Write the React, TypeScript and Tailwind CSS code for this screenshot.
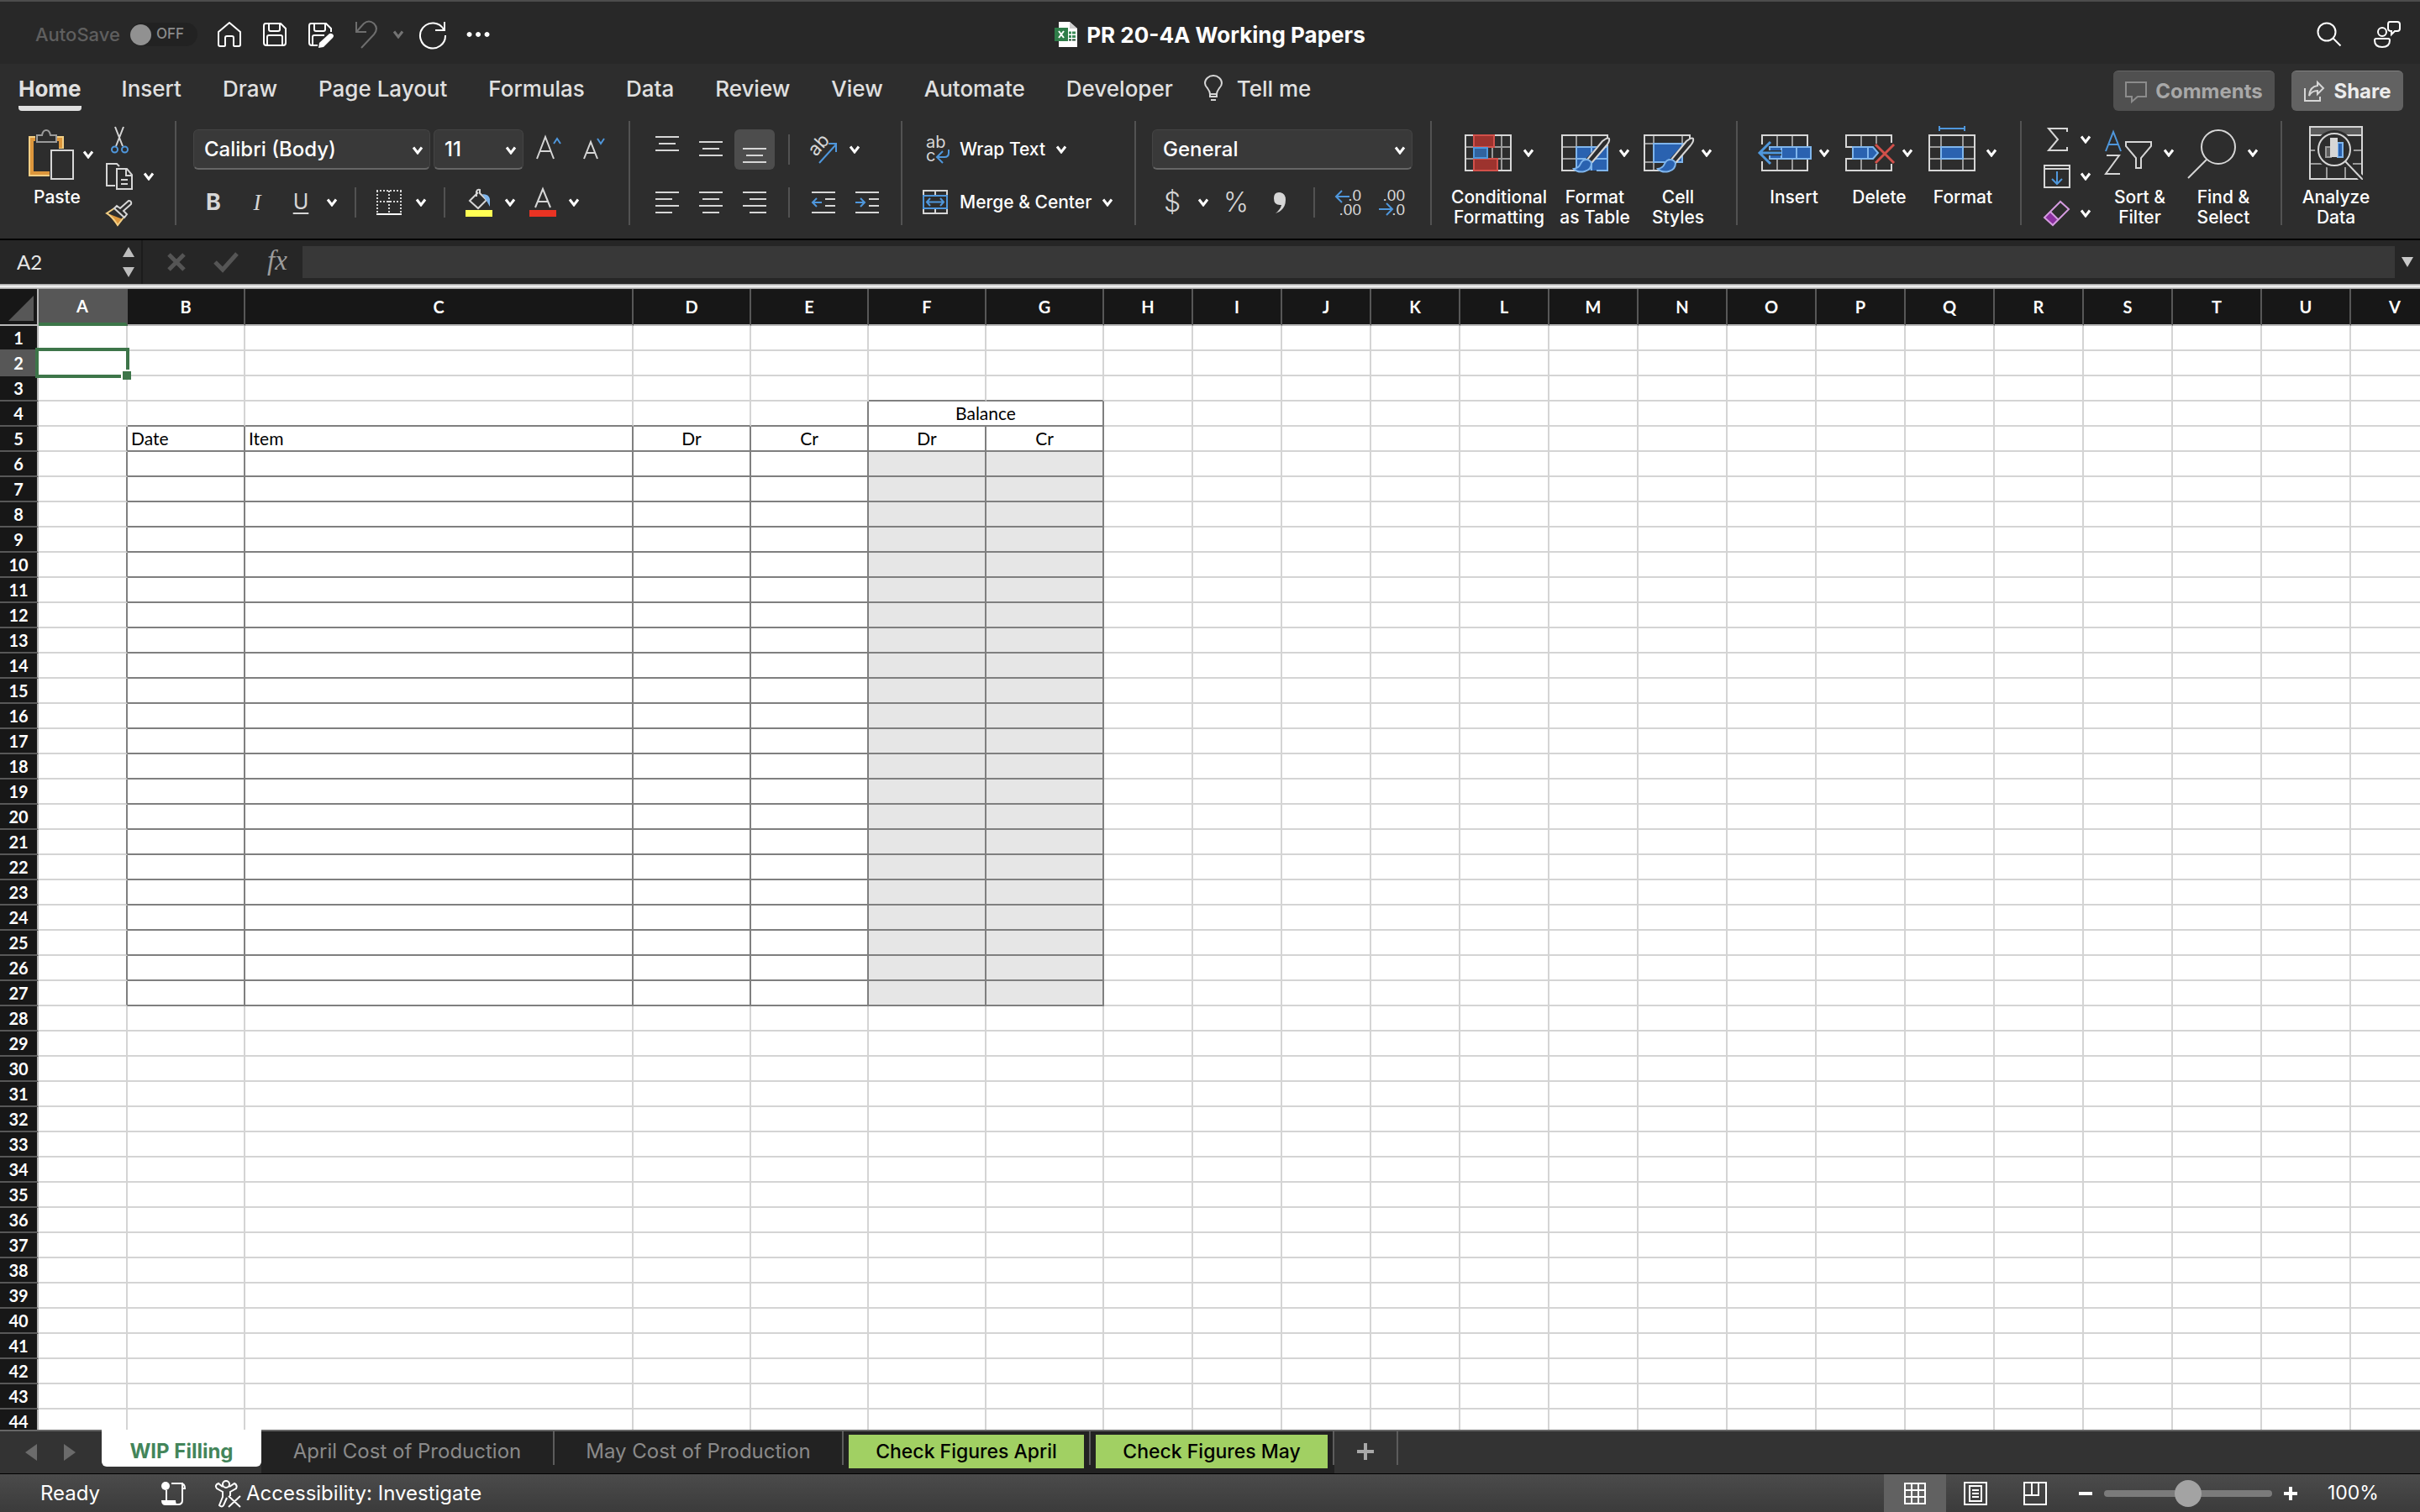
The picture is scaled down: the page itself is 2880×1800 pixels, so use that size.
import React from 'react';

const columns = [
  { name: 'A', col: 'w-[106px]' },
  { name: 'B', col: 'w-[140px]' },
  { name: 'C', col: 'w-[462px]' },
  { name: 'D', col: 'w-[140px]' },
  { name: 'E', col: 'w-[140px]' },
  { name: 'F', col: 'w-[140px]' },
  { name: 'G', col: 'w-[140px]' },
  ...'HIJKLMNOPQRSTUV'.split('').map((name) => ({ name, col: 'w-[106px]' })),
];

const rows = Array.from({ length: 44 }, (_, i) => i + 1);

const cellText: Record<string, string> = {
  F4: 'Balance',
  B5: 'Date',
  C5: 'Item',
  D5: 'Dr',
  E5: 'Cr',
  F5: 'Dr',
  G5: 'Cr',
};

const menuTabs = ['Insert', 'Draw', 'Page Layout', 'Formulas', 'Data', 'Review', 'View', 'Automate', 'Developer'];

const Chevron = ({ className = '' }) => (
  <svg className={`h-[10px] w-[14px] shrink-0 ${className}`} viewBox="0 0 14 10" fill="none" stroke="#fff" strokeWidth="3">
    <path d="M2 1.5 7 8l5-6.5" />
  </svg>
);

// Svg canvas whose units are page pixels
const Icon = ({ w, h, className, children }: { w: number; h: number; className: string; children: React.ReactNode }) => (
  <svg className={`shrink-0 overflow-visible ${className}`} viewBox={`0 0 ${w} ${h}`} fill="none" stroke="#d6d6d6" strokeWidth="2">
    {children}
  </svg>
);

const Lines = ({ d, className = 'h-12 w-7', h = 48 }: { d: string; className?: string; h?: number }) => (
  <Icon w={28} h={h} className={className}>
    <path d={d} />
  </Icon>
);

const Divider = ({ className = '' }) => <div className={`h-9 w-0.5 shrink-0 bg-[#525252] ${className}`} />;

const Group = ({ className = '', children }: { className?: string; children: React.ReactNode }) => (
  <div className={`flex h-[124px] shrink-0 border-r-2 border-[#525252] ${className}`}>{children}</div>
);

// Large ribbon button: icon with a chevron, label below
const BigButton = ({ label, className, chevron = true, children }: { label: string[]; className: string; chevron?: boolean; children: React.ReactNode }) => (
  <button className={`flex shrink-0 flex-col items-center pt-1.5 text-[21px] leading-6 font-medium text-white ${className}`}>
    <span className="flex h-16 w-full items-center justify-between">
      {children}
      {chevron && <Chevron />}
    </span>
    <span className="mt-[9px] flex flex-col items-center whitespace-nowrap">
      {label.map((line) => (
        <span key={line}>{line}</span>
      ))}
    </span>
  </button>
);

const Dropdown = ({ label, value, className }: { label: string; value: string; className: string }) => (
  <div className={`relative h-12 shrink-0 ${className}`}>
    <select
      aria-label={label}
      defaultValue={value}
      className="h-full w-full appearance-none rounded-md border border-b-2 border-[#444] border-b-[#666] bg-[#393939] pl-3 text-[24px] font-medium text-white"
    >
      <option>{value}</option>
    </select>
    <Chevron className="pointer-events-none absolute top-5 right-2" />
  </div>
);

const TitleBar = () => (
  <header className="grid h-[76px] shrink-0 grid-cols-[1fr_auto_1fr] items-center border-t-2 border-[#4c4c4c] bg-[#282828] pt-1">
    <div className="flex items-center pl-[42px]">
      <label className="flex items-center gap-3 text-[22px] font-medium text-[#5f5f5f]">
        AutoSave
        <input type="checkbox" className="peer sr-only" />
        <span className="flex h-7 w-20 items-center gap-1.5 rounded-full bg-[#222] text-[17px] text-[#8c8c8c]">
          <span className="h-[25px] w-[25px] rounded-full bg-[#919191]" />
          OFF
        </span>
      </label>
      <button aria-label="Home" className="ml-[22px]">
        <Icon w={32} h={32} className="h-8 w-8">
          <path stroke="#fff" strokeLinejoin="round" d="M3 13 16 2l13 11v15q0 2-2 2h-5q-1 0-1-1v-9q0-2-2-2h-6q-2 0-2 2v9q0 1-1 1H5q-2 0-2-2Z" />
        </Icon>
      </button>
      <button aria-label="Save" className="ml-[22px]">
        <Icon w={32} h={32} className="h-8 w-8">
          <path stroke="#fff" d="M5 3h18l6 6v17q0 3-3 3H6q-3 0-3-3V6q0-3 2-3ZM9 3v7q0 2 2 2h9q2 0 2-2V3M7 29V19q0-2 2-2h14q2 0 2 2v10" />
        </Icon>
      </button>
      <button aria-label="Save as" className="ml-[22px]">
        <Icon w={32} h={32} className="h-8 w-8">
          <path stroke="#fff" d="M29 13V9l-6-6H5Q3 3 3 6v20q0 3 3 3h7M9 3v7q0 2 2 2h9q2 0 2-2V3M7 29V19q0-2 2-2h12" />
          <path fill="#fff" stroke="none" d="M27 15q3-1 5 2 0 2-1 3L20 31l-6 1 1-6Z" />
        </Icon>
      </button>
      <button aria-label="Undo" className="ml-6">
        <Icon w={32} h={34} className="h-[34px] w-8">
          <path stroke="#6e6e6e" d="M3 2v12h12M3 14 12 4q6-5 12 0 6 6 0 13L9 33" />
        </Icon>
      </button>
      <Chevron className="ml-3.5 opacity-35" />
      <button aria-label="Redo" className="ml-4">
        <Icon w={36} h={34} className="h-[34px] w-9">
          <path stroke="#fff" d="M32 2v10H21M31 11A15 15 0 1 0 33 18" />
        </Icon>
      </button>
      <button aria-label="More" className="ml-[22px]">
        <Icon w={28} h={8} className="h-2 w-7">
          <path fill="#fff" stroke="none" d="M3.5 1a3 3 0 1 0 .1 0ZM14 1a3 3 0 1 0 .1 0ZM24.5 1a3 3 0 1 0 .1 0Z" />
        </Icon>
      </button>
    </div>
    <h1 className="flex items-center gap-2.5 text-[26px] font-bold whitespace-nowrap text-white">
      <Icon w={28} h={30} className="h-[30px] w-7">
        <path fill="#fff" stroke="none" d="M5 0h13l9 8v22H5Z" />
        <path fill="#cfcfcf" stroke="none" d="M18 0v8h9Z" />
        <path stroke="#3a8a57" strokeWidth="3" d="M17 13h8M17 17.5h8" />
        <path stroke="#1d4a2e" d="M17 21.5h8" />
        <path stroke="#fff" strokeWidth="1" d="M20.5 10v14" />
        <path fill="#2f7d49" stroke="none" d="M0 7h16v16H0Z" />
        <path stroke="#fff" d="m5 11 6 8M11 11l-6 8" />
      </Icon>
      PR 20-4A Working Papers
    </h1>
    <div className="flex items-center justify-end gap-9 pr-[22px]">
      <button aria-label="Search">
        <Icon w={32} h={32} className="h-8 w-8">
          <g stroke="#fff">
            <circle cx="13" cy="13" r="10.5" />
            <path d="m20.5 20.5 9 9" />
          </g>
        </Icon>
      </button>
      <button aria-label="Presence">
        <Icon w={34} h={34} className="h-[34px] w-[34px]">
          <g stroke="#fff">
            <circle cx="11" cy="14" r="5" />
            <path d="M4 22h14q2 0 2 2 0 8-9 8t-9-8q0-2 2-2ZM20 2h9q3 0 3 3v5q0 3-3 3h-3l-4 4v-4q-4 0-4-3V5q0-3 2-3Z" />
          </g>
        </Icon>
      </button>
    </div>
  </header>
);

const MenuBar = () => (
  <nav className="flex h-[68px] shrink-0 items-start bg-[#2d2d2d] pr-5 pl-[22px] text-[26px] font-medium text-[#e0e0e0]">
    <button className="h-14 rounded-b-sm border-b-[6px] border-[#e0e0e0] pt-2 font-bold">Home</button>
    <div className="ml-12 flex h-[58px] items-center gap-[49px] whitespace-nowrap">
      {menuTabs.map((tab) => (
        <button key={tab}>{tab}</button>
      ))}
    </div>
    <button className="ml-9 flex h-[58px] items-center gap-4">
      <Icon w={24} h={32} className="h-8 w-6">
        <path d="M8 23q0-3-3-7-3-3-3-6a10 9 0 0 1 20 0q0 3-3 6-3 4-3 7v3H8Zm0 0h8" />
        <path strokeWidth="2" d="M9 30h6" />
      </Icon>
      Tell me
    </button>
    <div className="mt-2 ml-auto flex gap-5 font-bold">
      <button className="flex h-12 w-48 items-center justify-center gap-2.5 rounded-md border-t border-[#666] bg-[#505050] text-[24px] text-[#a8a8a8]">
        <Icon w={26} h={26} className="h-[26px] w-[26px]">
          <path stroke="#8c8c8c" d="M1 2h24v17H15l-7 6v-6H1Z" />
        </Icon>
        Comments
      </button>
      <button className="flex h-12 w-[133px] items-center justify-center gap-2.5 rounded-md border-t border-[#808080] bg-[#626262] text-[24px] text-[#ececec]">
        <Icon w={26} h={26} className="h-[26px] w-[26px]">
          <path d="M2 9v15h18v-5M17 2l7 7-7 7v-4q-7 0-10 6 1-11 10-12Z" />
        </Icon>
        Share
      </button>
    </div>
  </nav>
);

// Paint brush shared by the table and cell style buttons
const Brush = () => (
  <>
    <path stroke="#2d2d2d" strokeWidth="8" d="M56 18 34 42" />
    <path fill="#2d2d2d" d="M33 40 51 18q6-5 8-3 1 3-3 8L38 44Z" />
    <path fill="#2a62b0" stroke="#7fb5ec" d="M32 40q-5 0-7 5-2 5-8 6 5 5 13 3 8-2 8-10-2-4-6-4Z" />
  </>
);

const Ribbon = () => (
  <section className="flex h-[140px] shrink-0 bg-[#2d2d2d]">
    <Group className="w-[210px] items-start pl-[34px]">
      <button className="w-[78px] pt-2.5 text-left text-[21px] leading-6 font-medium text-white">
        <span className="flex items-center gap-2.5">
          <Icon w={54} h={60} className="h-[60px] w-[54px]">
            <path stroke="#f2cf85" strokeWidth="6" d="M8 11H3v42h22M34 11h5v12" />
            <path stroke="#dc963c" strokeWidth="4" d="M8 12H4v40h21M34 12h4v10" />
            <path fill="#2d2d2d" stroke="#9a9a9a" d="M10 15V7h6q1-6 5-6t5 6h7v8Z" />
            <path fill="#2d2d2d" d="M27 25h26v34H27Z" />
          </Icon>
          <Chevron />
        </span>
        <span className="mt-[9px] block pl-1.5">Paste</span>
      </button>
      <div className="ml-3.5 flex flex-col gap-3 pt-1.5">
        <button aria-label="Cut" className="h-8">
          <Icon w={32} h={32} className="h-8 w-8">
            <path d="m11 1 9 23M21 1l-9 23" />
            <circle cx="10.5" cy="28" r="3.5" stroke="#4f97dc" />
            <circle cx="22.5" cy="28" r="3.5" stroke="#4f97dc" />
          </Icon>
        </button>
        <button aria-label="Copy" className="flex h-8 items-center gap-3">
          <Icon w={32} h={32} className="h-8 w-8">
            <path d="M11 27H1V1h12l3 3M13 7h12l6 7v17H13ZM24 7v8h7M18 20h8M18 25h8" />
          </Icon>
          <Chevron />
        </button>
        <button aria-label="Format painter" className="h-8">
          <Icon w={32} h={32} className="h-8 w-8">
            <path fill="#dc963c" stroke="none" d="m2 16 18 7-6 8Z" />
            <path stroke="#f2cf85" d="m10 10-9 6q7 4 13 14l7-9" />
            <path d="m10 10 12 11 3-4-4-4 9-8q1-4-3-4l-10 9-4-3Z" />
          </Icon>
        </button>
      </div>
    </Group>

    <Group className="w-[540px] flex-col gap-5 pt-2.5 pl-5">
      <div className="flex h-12 items-center">
        <Dropdown label="Font" value="Calibri (Body)" className="w-[282px]" />
        <Dropdown label="Font size" value="11" className="ml-1 w-[107px]" />
        <button aria-label="Increase font size" className="ml-3.5">
          <Icon w={32} h={32} className="h-8 w-8">
            <path d="M2 27 12 1l10 26M5 18h14" />
            <path stroke="#4f97dc" d="m22 9 4-6 4 6" />
          </Icon>
        </button>
        <button aria-label="Decrease font size" className="ml-6">
          <Icon w={28} h={32} className="h-8 w-7">
            <path d="m2 27 8-20 8 20M5 20h10" />
            <path stroke="#4f97dc" d="m18 3 4 6 4-6" />
          </Icon>
        </button>
      </div>
      <div className="flex h-[38px] items-center pl-2 text-[27px] text-[#d6d6d6]">
        <button className="w-8 font-bold">B</button>
        <button className="ml-5 w-8 font-['Liberation_Serif'] italic">I</button>
        <button className="ml-5 w-8 text-[25px] underline decoration-2 underline-offset-4">U</button>
        <Chevron className="ml-3.5" />
        <Divider className="ml-5" />
        <button aria-label="Borders" className="ml-6">
          <Icon w={30} h={32} className="h-8 w-[30px]">
            <path strokeDasharray="2 2" d="M0 2h30M0 15h30M1 2v26M15 2v26M29 2v26" />
            <path stroke="#fff" d="M0 30h30" />
          </Icon>
        </button>
        <Chevron className="ml-4" />
        <Divider className="ml-5" />
        <button aria-label="Fill color" className="ml-6">
          <Icon w={32} h={34} className="h-[34px] w-8">
            <path d="M15 5 5 15l10 9 10-10-8-8V2q-3-1-4 2v6" />
            <path fill="#7fb5ec" stroke="none" d="M20 7q8 0 9 6v9l-4-7Z" />
            <path fill="#fffe54" stroke="none" d="M0 26h32v8H0Z" />
          </Icon>
        </button>
        <Chevron className="ml-3.5" />
        <button aria-label="Font color" className="ml-4">
          <Icon w={32} h={34} className="h-[34px] w-8">
            <path d="m7 23 9-22 9 22M10 16h12" />
            <path fill="#e93323" stroke="none" d="M0 26h32v8H0Z" />
          </Icon>
        </button>
        <Chevron className="ml-3.5" />
      </div>
    </Group>

    <Group className="w-[324px] flex-col gap-5 pt-2.5 pl-5">
      <div className="flex h-12 items-center">
        <div className="flex gap-1">
          <button aria-label="Align top" className="flex w-12 justify-center"><Lines d="M0 9h28M4 17h20M0 25h28" /></button>
          <button aria-label="Align middle" className="flex w-12 justify-center"><Lines d="M0 15h28M4 23h20M0 31h28" /></button>
          <button aria-label="Align bottom" className="flex w-12 justify-center rounded-md bg-[#4d4d4d]"><Lines d="M0 23h28M4 31h20M0 39h28" /></button>
        </div>
        <Divider className="ml-4" />
        <button aria-label="Orientation" className="ml-[22px]">
          <Icon w={36} h={36} className="h-9 w-9">
            <text transform="translate(9 27) rotate(-48)" fill="#d6d6d6" stroke="none" fontSize="22" fontFamily="Inter">ab</text>
            <path stroke="#4f97dc" d="m13 34 20-22M24 11h9v10" />
          </Icon>
        </button>
        <Chevron className="ml-3" />
      </div>
      <div className="flex h-[38px] items-center">
        <div className="flex gap-1">
          <button aria-label="Align left" className="flex w-12 justify-center"><Lines className="h-[26px] w-7" h={26} d="M0 1h28M0 9h20M0 17h28M0 25h20" /></button>
          <button aria-label="Center" className="flex w-12 justify-center"><Lines className="h-[26px] w-7" h={26} d="M0 1h28M4 9h20M0 17h28M4 25h20" /></button>
          <button aria-label="Align right" className="flex w-12 justify-center"><Lines className="h-[26px] w-7" h={26} d="M0 1h28M8 9h20M0 17h28M8 25h20" /></button>
        </div>
        <Divider className="ml-4" />
        <div className="ml-4 flex gap-1">
          <button aria-label="Decrease indent" className="flex w-12 justify-center">
            <Icon w={28} h={26} className="h-[26px] w-7">
              <path d="M0 1h28M16 9h12M16 17h12M0 25h28" />
              <path stroke="#4f97dc" d="M12 13H1M6 8l-5 5 5 5" />
            </Icon>
          </button>
          <button aria-label="Increase indent" className="flex w-12 justify-center">
            <Icon w={28} h={26} className="h-[26px] w-7">
              <path d="M0 1h28M16 9h12M16 17h12M0 25h28" />
              <path stroke="#4f97dc" d="M0 13h11M6 8l5 5-5 5" />
            </Icon>
          </button>
        </div>
      </div>
    </Group>

    <Group className="w-[278px] flex-col gap-5 pt-2.5 pl-6 text-[21px] font-medium text-white">
      <button className="flex h-12 items-center gap-3 whitespace-nowrap">
        <Icon w={32} h={34} className="h-[34px] w-8">
          <text x="4" y="15" fill="#d6d6d6" stroke="none" fontSize="20" fontWeight="400" fontFamily="Inter">ab</text>
          <text x="4" y="31" fill="#d6d6d6" stroke="none" fontSize="20" fontWeight="400" fontFamily="Inter">c</text>
          <path stroke="#4f97dc" d="M31 17v4q0 5-5 5h-9M24 19l-7 7 7 7" />
        </Icon>
        Wrap Text
        <Chevron />
      </button>
      <button className="flex h-[38px] items-center gap-3 whitespace-nowrap">
        <Icon w={32} h={32} className="h-8 w-8">
          <path d="M1 2h28v27H1ZM15 2v6M15 23v6" />
          <path fill="#2d2d2d" stroke="#4f97dc" d="M1 8h28v15H1ZM5 15.5h20M9 11l-4 4.5 4 4.5M21 11l4 4.5-4 4.5" />
        </Icon>
        Merge &amp; Center
        <Chevron />
      </button>
    </Group>

    <Group className="w-[352px] flex-col gap-5 pt-2.5 pl-[19px]">
      <Dropdown label="Number format" value="General" className="w-[310px]" />
      <div className="flex h-[38px] items-center pl-2 text-[32px] font-light text-[#d6d6d6]">
        <button className="w-8">$</button>
        <Chevron className="ml-3.5" />
        <button className="ml-4 w-8">%</button>
        <button aria-label="Comma style" className="ml-5 w-8">
          <Icon w={32} h={32} className="h-8 w-8">
            <path fill="#d6d6d6" stroke="none" d="M15 4q8 0 8 9 0 12-12 16 6-5 7-10-9 1-9-8 0-7 6-7Z" />
          </Icon>
        </button>
        <Divider className="ml-6" />
        <button aria-label="Increase decimal" className="ml-[22px]">
          <Icon w={34} h={34} className="h-[34px] w-[34px]">
            <g fill="#d6d6d6" stroke="none" fontSize="19" fontWeight="400" fontFamily="Liberation Sans" textAnchor="end">
              <text x="33" y="15">.0</text>
              <text x="33" y="32">.00</text>
            </g>
            <path stroke="#4f97dc" d="M19 10H3M10 3l-7 7 7 7" />
          </Icon>
        </button>
        <button aria-label="Decrease decimal" className="ml-[18px]">
          <Icon w={34} h={34} className="h-[34px] w-[34px]">
            <g fill="#d6d6d6" stroke="none" fontSize="19" fontWeight="400" fontFamily="Liberation Sans" textAnchor="end">
              <text x="33" y="15">.00</text>
              <text x="33" y="32">.0</text>
            </g>
            <path stroke="#4f97dc" d="M2 25h16M11 18l7 7-7 7" />
          </Icon>
        </button>
      </div>
    </Group>

    <Group className="w-[364px] pl-[22px]">
      <BigButton label={['Conditional', 'Formatting']} className="w-[116px] px-4">
        <Icon w={58} h={64} className="h-16 w-[58px]">
          <path stroke="#9a9a9a" d="M2 25h54M2 39h54M45 11v42M12 11v42M34 11v42" />
          <path d="M2 11h54v42H2Z" />
          <path fill="#9d332e" stroke="#d2504a" d="M12 11h24v14H12ZM12 39h28v14H12Z" />
          <path fill="#31639f" stroke="#4f97dc" d="M12 26h16v12H12Z" />
        </Icon>
      </BigButton>
      <BigButton label={['Format', 'as Table']} className="ml-3.5 w-[84px]">
        <Icon w={62} h={64} className="h-16 w-[62px]">
          <path fill="#2a62b0" stroke="none" d="M20 25h37v28H20Z" />
          <path stroke="#9a9a9a" d="M3 25h54M3 39h17M20 11v42M38 11v14" />
          <path d="M57 25V11H3v42h20" />
          <path stroke="#7fb5ec" d="M20 53V25h37v28H44M20 39h37M38 25v28" />
          <Brush />
        </Icon>
      </BigButton>
      <BigButton label={['Cell', 'Styles']} className="ml-4 w-[82px]">
        <Icon w={62} h={64} className="h-16 w-[62px]">
          <path stroke="#9a9a9a" d="M1 21h54M1 43h12M12 11v42M46 11v10" />
          <path d="M55 21V11H1v42h22" />
          <path fill="#2a62b0" stroke="#7fb5ec" d="M12 21h34v22H12Z" />
          <Brush />
        </Icon>
      </BigButton>
    </Group>

    <Group className="w-[338px] gap-[18px] pl-6">
      <BigButton label={['Insert']} className="w-[86px]">
        <Icon w={66} h={64} className="h-16 w-[66px]">
          <path stroke="#9a9a9a" d="M23 11v14M41 11v14M23 39v14M41 39v14" />
          <path d="M5 22V11h54v14M5 42v11h54V39" />
          <path fill="#2a62b0" stroke="#7fb5ec" d="M14 25h49v14H14ZM28 25v14M46 25v14" />
          <path stroke="#2d2d2d" strokeWidth="6" d="M28 32H6" />
          <path stroke="#4f97dc" strokeWidth="3" d="M28 32H2M15 19 2 32l13 13" />
        </Icon>
      </BigButton>
      <BigButton label={['Delete']} className="w-[81px]">
        <Icon w={62} h={64} className="h-16 w-[62px]">
          <path stroke="#9a9a9a" d="M19 11v14M37 11v10M19 39v14M37 45v8" />
          <path d="M9 25H1V11h54v9M9 39H1v14h54v-8" />
          <path fill="#2a62b0" stroke="#7fb5ec" d="M9 25h24l6 7-6 7H9ZM27 25v14" />
          <path stroke="#d2504a" strokeWidth="3" d="m36 22 22 22M58 22 36 44" />
        </Icon>
      </BigButton>
      <BigButton label={['Format']} className="w-[82px]">
        <Icon w={58} h={64} className="h-16 w-[58px]">
          <path stroke="#9a9a9a" d="M1 25h54M1 39h54M15 11v42M41 11v42" />
          <path d="M1 11h54v42H1Z" />
          <path fill="#2a62b0" stroke="#7fb5ec" d="M15 25h26v14H15Z" />
          <path stroke="#4f97dc" d="M13 3h30M13 0v6M43 0v6" />
        </Icon>
      </BigButton>
    </Group>

    <Group className="w-[310px] pl-[26px]">
      <div className="flex flex-col gap-3 pt-1.5">
        <button aria-label="AutoSum" className="flex h-8 items-center gap-[11px]">
          <Icon w={32} h={32} className="h-8 w-8">
            <path d="M28 7V3H6l11 13L6 29h22v-4" />
          </Icon>
          <Chevron />
        </button>
        <button aria-label="Fill" className="flex h-8 items-center gap-[11px]">
          <Icon w={32} h={32} className="h-8 w-8">
            <path d="M1 3h30v26H1ZM1 7h30" />
            <path stroke="#4f97dc" d="M16 10v15M10 19l6 6 6-6" />
          </Icon>
          <Chevron />
        </button>
        <button aria-label="Clear" className="flex h-8 items-center gap-[11px]">
          <Icon w={32} h={32} className="h-8 w-8">
            <path fill="#8b2fa0" stroke="none" d="m8 14 10 10-7 6L1 21Z" />
            <path stroke="#d59be0" d="M20 2 1 21l10 9 19-19ZM8 14l10 10" />
          </Icon>
          <Chevron />
        </button>
      </div>
      <BigButton label={['Sort &', 'Filter']} className="ml-4 w-[83px]">
        <Icon w={60} h={64} className="h-16 w-[60px]">
          <path stroke="#4f97dc" d="m1 30 9-23 9 23M4 22h12" />
          <path d="M2 35h15L1 57h17M25 19h30v5L43 38v12h-6V38L25 24Z" />
        </Icon>
      </BigButton>
      <BigButton label={['Find &', 'Select']} className="ml-4 w-[84px]">
        <Icon w={62} h={64} className="h-16 w-[62px]">
          <circle cx="36" cy="25" r="20" />
          <path d="M22 40 0 62" />
        </Icon>
      </BigButton>
    </Group>

    <BigButton label={['Analyze', 'Data']} chevron={false} className="ml-[22px] w-[84px] px-2.5">
      <Icon w={64} h={64} className="h-16 w-16">
        <path fill="#5c5c5c" stroke="none" d="M1 1h62v10H1Z" />
        <path stroke="#9a9a9a" d="M1 29h10M52 29h11M1 45h40M52 45h11M21 49v14M43 49v14" />
        <path d="M1 1h62v62H1ZM1 11h62" />
        <circle cx="30" cy="28" r="22" fill="#2d2d2d" stroke="#2d2d2d" />
        <path stroke="#2d2d2d" strokeWidth="7" d="m43 43 20 20" />
        <path fill="#5c5c5c" stroke="#9a9a9a" d="M20 25h6v12h-6Z" />
        <path fill="#2a62b0" stroke="#7fb5ec" d="M34 20h6v17h-6Z" />
        <path fill="#d6d6d6" stroke="none" d="M25 14h9v23h-9Z" />
        <circle cx="30" cy="28" r="19" />
        <path d="m43 42 20 21" />
      </Icon>
    </BigButton>
  </section>
);

const FormulaBar = () => (
  <section className="flex h-[54px] shrink-0 items-center border-t-2 border-black bg-[#262626]">
    <div className="flex h-full w-[170px] items-center justify-between border-r-2 border-[#1c1c1c] pr-2">
      <input aria-label="Name box" defaultValue="A2" className="w-28 bg-transparent pl-5 font-['Lato'] text-[24px] text-[#e6e6e6] outline-none" />
      <button aria-label="Cell list">
        <Icon w={14} h={38} className="h-[38px] w-3.5">
          <path fill="#bdbdbd" stroke="none" d="m7 1 7 12H0ZM0 25h14L7 37Z" />
        </Icon>
      </button>
    </div>
    <button aria-label="Cancel" className="ml-7">
      <Icon w={24} h={24} className="h-6 w-6">
        <path stroke="#555" strokeWidth="5" d="m3 3 18 18M21 3 3 21" />
      </Icon>
    </button>
    <button aria-label="Enter" className="ml-8">
      <Icon w={30} h={24} className="h-6 w-[30px]">
        <path stroke="#555" strokeWidth="5" d="m2 12 9 9L28 2" />
      </Icon>
    </button>
    <button className="ml-[34px] pb-1 font-['Liberation_Serif'] text-[33px] leading-9 text-[#9c9c9c] italic">fx</button>
    <input aria-label="Formula" className="ml-[18px] h-[38px] min-w-0 flex-1 bg-[#383838] px-2 font-['Lato'] text-[24px] text-white outline-none" />
    <button aria-label="Expand formula bar" className="px-2">
      <Icon w={14} h={12} className="h-3 w-3.5">
        <path fill="#c8c8c8" stroke="none" d="M0 0h14L7 12Z" />
      </Icon>
    </button>
  </section>
);

// Ledger block runs B5:G27, the two balance columns start a row higher
const cellStyle = (c: number, r: number) => {
  const balance = c === 5 || c === 6;
  const inLedger = c >= 1 && c <= 6 && r >= 5 && r <= 27;
  const darkRight = inLedger || (c === 0 && r >= 5 && r <= 27) || (r === 4 && (c === 4 || balance));
  const darkBottom = inLedger || (r === 4 && c >= 1 && c <= 6) || (r === 3 && balance);
  return [
    darkRight ? 'border-r-[#7f7f7f]' : 'border-r-[#d4d4d4]',
    darkBottom ? 'border-b-[#7f7f7f]' : 'border-b-[#d4d4d4]',
    balance && r >= 6 && r <= 27 ? 'bg-[#e6e6e6]' : 'bg-white',
    c >= 3 ? 'text-center' : 'pl-1 text-left',
  ].join(' ');
};

const Sheet = () => (
  <main className="min-h-0 flex-1 overflow-hidden bg-white">
    <div className="h-1.5 bg-linear-to-b from-[#9a9a9a] via-white to-[#9a9a9a]" />
    <table className="w-[2904px] table-fixed border-separate border-spacing-0 font-['Lato'] text-[20px] leading-7 text-black">
      <colgroup>
        <col className="w-[46px]" />
        {columns.map((column) => (
          <col key={column.name} className={column.col} />
        ))}
      </colgroup>
      <thead>
        <tr className="h-11 bg-[#171717] font-bold text-white">
          <th className="border-r-2 border-b-2 border-[#b8b8b8] p-0">
            <svg className="mt-1 ml-2.5 h-[30px] w-[30px]" viewBox="0 0 30 30">
              <path fill="#575757" d="M30 0v30H0Z" />
            </svg>
          </th>
          {columns.map(({ name }) => (
            <th
              key={name}
              className={
                name === 'A'
                  ? 'border-r-2 border-b-4 border-r-[#575757] border-b-[#3d7549] bg-[#575757] p-0'
                  : 'border-r-2 border-b-2 border-r-[#575757] border-b-[#b8b8b8] p-0'
              }
            >
              {name}
            </th>
          ))}
        </tr>
      </thead>
      <tbody>
        {rows.map((r) => (
          <tr key={r} className="h-[30px]">
            <th
              className={`border-r-2 border-b-2 border-r-[#b8b8b8] border-b-[#575757] p-0 font-bold text-white ${
                r === 2 ? 'bg-[#575757]' : 'bg-[#171717]'
              }`}
            >
              {r}
            </th>
            {columns.map(({ name }, c) => {
              // G4 is merged into F4
              if (r === 4 && name === 'G') return null;
              return (
                <td
                  key={name}
                  colSpan={r === 4 && name === 'F' ? 2 : 1}
                  className={`relative border-r-2 border-b-2 p-0 text-[21px] ${cellStyle(c, r)}`}
                >
                  {cellText[name + r]}
                  {r === 2 && name === 'A' && (
                    <span className="absolute -top-1 -right-1 -bottom-1 -left-1 z-10 border-4 border-[#3d7549]">
                      <span className="absolute -right-1.5 -bottom-1.5 h-3 w-3 border-t-2 border-l-2 border-white bg-[#3d7549]" />
                    </span>
                  )}
                </td>
              );
            })}
          </tr>
        ))}
      </tbody>
    </table>
  </main>
);

const SheetTabs = () => (
  <nav className="flex h-[52px] shrink-0 items-start bg-[#333] text-[24px] whitespace-nowrap">
    <div className="flex h-full w-[121px] items-center gap-8 border-t-2 border-[#666] pl-[30px]">
      <button aria-label="Previous sheet">
        <Icon w={14} h={20} className="h-5 w-3.5">
          <path fill="#6b6b6b" stroke="none" d="M14 0v20L0 10Z" />
        </Icon>
      </button>
      <button aria-label="Next sheet">
        <Icon w={14} h={20} className="h-5 w-3.5">
          <path fill="#6b6b6b" stroke="none" d="m0 0 14 10L0 20Z" />
        </Icon>
      </button>
    </div>
    <button className="h-11 w-[190px] rounded-b-md bg-white pt-2 font-bold text-[#43855a]">WIP Filling</button>
    <div className="flex h-full items-start border-t-2 border-[#666] bg-[#222] text-[#8a8a8a]">
      <button className="h-10 w-[349px] border-r-2 border-[#5c5c5c] pt-1.5">April Cost of Production</button>
      <button className="h-10 w-[344px] border-r-2 border-[#5c5c5c] pt-1.5">May Cost of Production</button>
      <div className="flex h-10 w-[294px] justify-center border-r-2 border-[#5c5c5c] pt-1">
        <button className="h-10 w-[280px] bg-[#a1d063] text-[23px] font-medium text-black">Check Figures April</button>
      </div>
      <div className="flex h-10 w-[290px] justify-center border-r-2 border-[#5c5c5c] pt-1">
        <button className="h-10 w-[276px] bg-[#a1d063] text-[23px] font-medium text-black">Check Figures May</button>
      </div>
    </div>
    <div className="h-full flex-1 border-t-2 border-[#666]">
      <button aria-label="New sheet" className="flex h-10 w-[76px] items-center justify-center border-r-2 border-[#5c5c5c] pt-2">
        <Icon w={20} h={20} className="h-5 w-5">
          <path stroke="#a8a8a8" strokeWidth="4" d="M10 0v20M0 10h20" />
        </Icon>
      </button>
    </div>
  </nav>
);

const StatusBar = () => (
  <footer className="flex h-[46px] shrink-0 items-center border-t border-black bg-linear-to-b from-[#4b4b4b] to-[#3b3b3b] pl-12 text-[24px] text-white">
    <span className="w-[70px]">Ready</span>
    <button aria-label="Record macro" className="ml-[73px]">
      <Icon w={32} h={30} className="h-[30px] w-8">
        <circle cx="6" cy="6" r="5" fill="#fff" stroke="none" />
        <path stroke="#fff" d="M7 11v13M13 3h13v20q0 5-5 5H7M24 3q5 0 5 6h-4" />
        <path fill="#fff" stroke="none" d="M1 23h17q0 5 3 6H6q-5 0-5-6Z" />
      </Icon>
    </button>
    <button className="ml-8 flex items-center gap-1.5">
      <Icon w={32} h={34} className="h-[34px] w-8">
        <g stroke="#fff">
          <circle cx="14" cy="6" r="4" />
          <path d="M10 9 5 5Q0 7 3 11l7 4v6L6 31q3 3 5 0l4-9M18 9l6-4q4 2 2 6l-7 4v5M17 20l14 13M31 20 17 33" />
        </g>
      </Icon>
      Accessibility: Investigate
    </button>
    <div className="ml-auto flex h-full items-center pr-12">
      <button aria-label="Normal view" className="flex h-full w-[74px] items-center justify-center bg-[#616161]">
        <Icon w={28} h={28} className="h-7 w-7">
          <path stroke="#fff" d="M2 2h24v24H2ZM10 2v24M18 2v24M2 10h24M2 18h24" />
        </Icon>
      </button>
      <button aria-label="Page layout view" className="ml-[21px]">
        <Icon w={28} h={28} className="h-7 w-7">
          <path stroke="#fff" d="M1 1h26v26H1ZM7 5h14v18H7ZM10 10h8M10 14h8M10 18h8" />
        </Icon>
      </button>
      <button aria-label="Page break view" className="ml-[43px]">
        <Icon w={28} h={28} className="h-7 w-7">
          <path stroke="#fff" d="M1 1h26v26H1ZM10 1v15M18 1v15H1" />
        </Icon>
      </button>
      <button aria-label="Zoom out" className="ml-[38px]">
        <Icon w={16} h={16} className="h-4 w-4">
          <path stroke="#fff" strokeWidth="4" d="M0 8h16" />
        </Icon>
      </button>
      <input
        type="range"
        aria-label="Zoom"
        min="0"
        max="100"
        defaultValue="50"
        className="mx-3.5 h-2 w-[200px] appearance-none rounded-full bg-[#7b7b7b] [&::-webkit-slider-thumb]:h-8 [&::-webkit-slider-thumb]:w-8 [&::-webkit-slider-thumb]:appearance-none [&::-webkit-slider-thumb]:rounded-full [&::-webkit-slider-thumb]:bg-[#a3a3a3]"
      />
      <button aria-label="Zoom in">
        <Icon w={16} h={16} className="h-4 w-4">
          <path stroke="#fff" strokeWidth="4" d="M0 8h16M8 0v16" />
        </Icon>
      </button>
      <span className="ml-9 w-[62px] text-[23px]">100%</span>
    </div>
  </footer>
);

const App = () => {
  return (
    <div className="flex h-screen flex-col overflow-hidden bg-[#2d2d2d] font-['Inter',sans-serif]">
      <TitleBar />
      <MenuBar />
      <Ribbon />
      <FormulaBar />
      <Sheet />
      <SheetTabs />
      <StatusBar />
    </div>
  );
};

export default App;
